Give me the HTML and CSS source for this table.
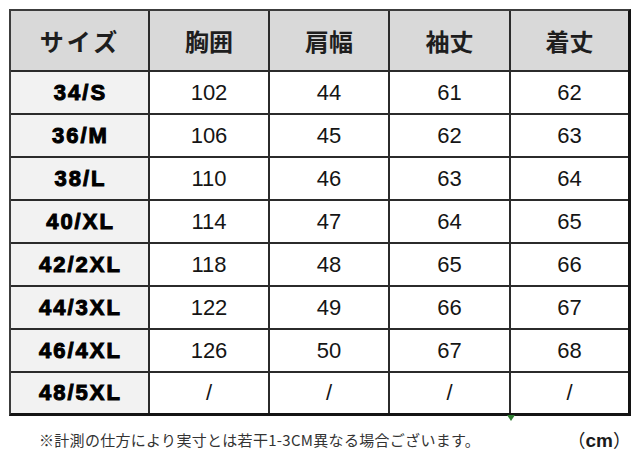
FILE: index.html
```html
<!DOCTYPE html>
<html lang="ja">
<head>
<meta charset="utf-8">
<title>サイズ表</title>
<link rel="stylesheet" href="styles.css">
</head>
<body>
<div class="page">
  <div class="chart">
    <div class="cell head size-head">サイズ</div>
    <div class="cell head">胸囲</div>
    <div class="cell head">肩幅</div>
    <div class="cell head">袖丈</div>
    <div class="cell head">着丈</div>

    <div class="cell size">34/S</div><div class="cell val">102</div><div class="cell val">44</div><div class="cell val">61</div><div class="cell val">62</div>
    <div class="cell size">36/M</div><div class="cell val">106</div><div class="cell val">45</div><div class="cell val">62</div><div class="cell val">63</div>
    <div class="cell size">38/L</div><div class="cell val">110</div><div class="cell val">46</div><div class="cell val">63</div><div class="cell val">64</div>
    <div class="cell size">40/XL</div><div class="cell val">114</div><div class="cell val">47</div><div class="cell val">64</div><div class="cell val">65</div>
    <div class="cell size">42/2XL</div><div class="cell val">118</div><div class="cell val">48</div><div class="cell val">65</div><div class="cell val">66</div>
    <div class="cell size">44/3XL</div><div class="cell val">122</div><div class="cell val">49</div><div class="cell val">66</div><div class="cell val">67</div>
    <div class="cell size">46/4XL</div><div class="cell val">126</div><div class="cell val">50</div><div class="cell val">67</div><div class="cell val">68</div>
    <div class="cell size">48/5XL</div><div class="cell val">/</div><div class="cell val">/</div><div class="cell val">/</div><div class="cell val">/</div>
    <span class="mark"></span>
  </div>
  <div class="footer">
    <p class="note">※計測の仕方により実寸とは若干1-3CM異なる場合ございます。</p>
    <p class="unit">（<b>cm</b>）</p>
  </div>
</div>
</body>
</html>
```

FILE: styles.css
```css
html, body {
  margin: 0;
  padding: 0;
  background: #ffffff;
}

.page {
  width: 640px;
  height: 458px;
  padding: 9px 0 0 9px;
  box-sizing: border-box;
}

.chart {
  position: relative;
  display: grid;
  grid-template-columns: 137px 118px 118px 119px 117px;
  grid-template-rows: 59px repeat(7, 41px) 40px;
  gap: 2px;
  width: max-content;
  background: #2b2b2b;
  border-left: 2px solid #3c3c3c;
  border-top: 2px solid #3c3c3c;
  border-right: 3px solid #141414;
  border-bottom: 3px solid #141414;
}

.cell {
  display: flex;
  align-items: center;
  justify-content: center;
  background: #ffffff;
  color: #151515;
}

.head {
  background: #d9d9d9;
  font-family: "Noto Sans CJK JP", "Liberation Sans", sans-serif;
  font-weight: 700;
  font-size: 24px;
  color: #1e1e1e;
}

.size-head {
  letter-spacing: 3px;
  padding-left: 1px;
}

.size {
  background: #f2f2f2;
  font-family: "Liberation Sans", Arial, sans-serif;
  font-weight: 700;
  font-size: 22px;
  letter-spacing: 2px;
  -webkit-text-stroke: 1px #000;
  color: #000;
  padding-left: 2px;
}

.val {
  font-family: "Liberation Sans", Arial, sans-serif;
  font-size: 22px;
}

.mark {
  position: absolute;
  left: 496px;
  bottom: -8px;
  width: 0;
  height: 0;
  border-left: 4px solid transparent;
  border-right: 4px solid transparent;
  border-top: 6px solid #2f7d32;
}

.footer {
  display: flex;
  justify-content: space-between;
  align-items: center;
  width: 622px;
  height: 46px;
  padding-left: 30px;
  box-sizing: border-box;
}

.note {
  margin: 0;
  font-family: "Noto Sans CJK JP", "Liberation Sans", sans-serif;
  font-size: 15px;
  letter-spacing: 0.3px;
  color: #333333;
}

.unit {
  margin: 0;
  font-family: "Noto Sans CJK JP", "Liberation Sans", sans-serif;
  font-size: 18px;
  color: #1a1a1a;
}

.unit b {
  font-family: "Liberation Sans", Arial, sans-serif;
  font-weight: 700;
  font-size: 19px;
}
```
